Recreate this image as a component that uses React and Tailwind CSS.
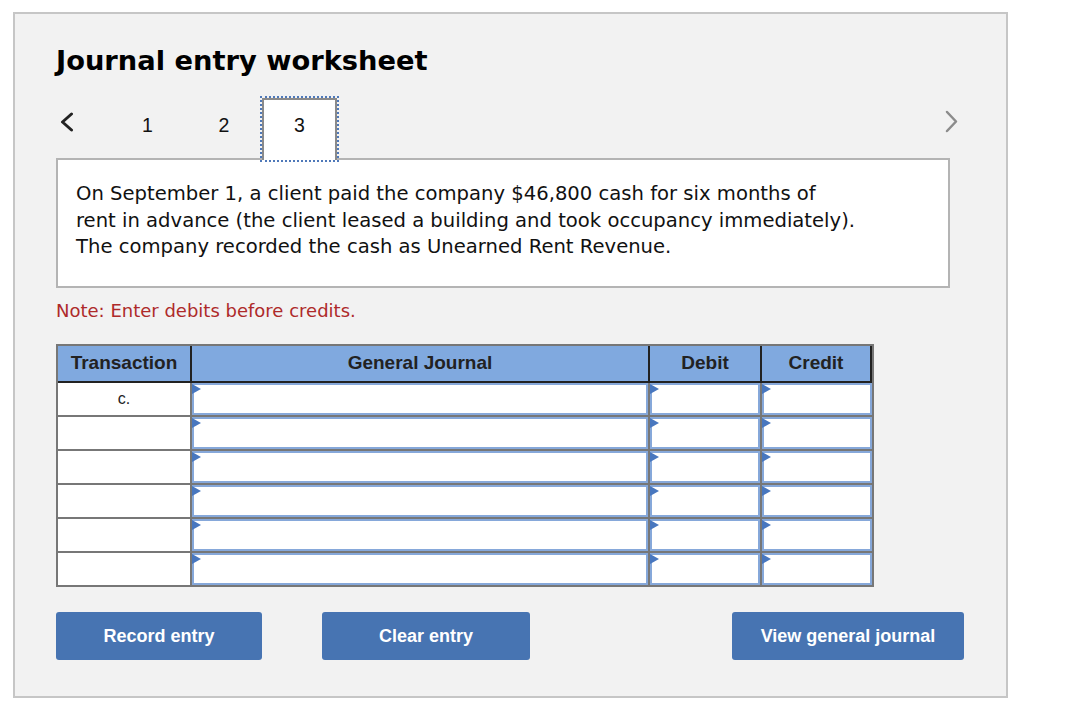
import React from 'react';

const rows = ['c.', '', '', '', '', ''];

const Flag = () => (
    <span className="absolute left-0 top-[1px] w-0 h-0 border-y-[5px] border-y-transparent border-l-[9px] border-l-[#4877bf]" />
);

const InputCell = ({ width, last }) => (
    <div className={`relative h-full ${width} ${last ? '' : 'border-r-2 border-[#777]'}`}>
        <div className="h-full w-full bg-white border-2 border-[#86a8da]" />
        <Flag />
    </div>
);

const App = () => {
    return (
        <div className="min-h-screen bg-white pt-[12px] pl-[13px]">
            <div className="w-[995px] h-[686px] border-2 border-[#c6c6c6] bg-[#f2f2f2] pt-[31px] pl-[41px]">
                {/* Title */}
                <h1 className="text-[27.3px] leading-[32px] font-bold text-black" style={{ fontFamily: '"DejaVu Sans", Verdana, sans-serif' }}>
                    Journal entry worksheet
                </h1>

                {/* Tabs */}
                <div className="mt-[19px] flex items-start h-[64px]" style={{ fontFamily: '"Liberation Sans", Arial, sans-serif' }}>
                    <button className="w-[53px] pt-[16px] pl-[4px] flex">
                        <svg width="14" height="20" viewBox="0 0 14 20" fill="none">
                            <polyline points="11.5,2 2.5,10 11.5,18" stroke="#222" strokeWidth="3" strokeLinecap="round" strokeLinejoin="round" />
                        </svg>
                    </button>
                    <div className="w-[77px] pt-[15px] text-center text-[19.5px] text-[#111]">1</div>
                    <div className="w-[76px] pt-[15px] text-center text-[19.5px] text-[#111]">2</div>
                    <div className="relative z-10 mt-[2px] w-[75px] h-[62px] bg-white border-2 border-b-0 border-[#8a8a8a] outline-2 outline-dotted outline-[#4f79b9] pt-[11px] text-center text-[19.5px] text-[#111]">
                        3
                    </div>
                    <button className="ml-auto mr-[48px] pt-[14px] flex">
                        <svg width="13" height="23" viewBox="0 0 13 23" fill="none">
                            <polyline points="2,2 11,11.5 2,21" stroke="#8c8c8c" strokeWidth="2.5" strokeLinecap="round" strokeLinejoin="round" />
                        </svg>
                    </button>
                </div>

                {/* Question text */}
                <div
                    className="-mt-[2px] w-[894px] h-[130px] bg-white border-2 border-[#b4b4b4] pt-[21px] pl-[18px] text-[19.6px] leading-[26.5px] text-[#111]"
                    style={{ fontFamily: '"DejaVu Sans", Verdana, sans-serif' }}
                >
                    On September 1, a client paid the company $46,800 cash for six months of
                    <br />
                    rent in advance (the client leased a building and took occupancy immediately).
                    <br />
                    The company recorded the cash as Unearned Rent Revenue.
                </div>

                <p className="mt-[11px] text-[18px] leading-[24px] text-[#ae2a2a]" style={{ fontFamily: '"DejaVu Sans", Verdana, sans-serif' }}>
                    Note: Enter debits before credits.
                </p>

                {/* Journal table */}
                <div className="mt-[21px] w-[818px] border-2 border-[#777]" style={{ fontFamily: '"Liberation Sans", Arial, sans-serif' }}>
                    <div className="flex h-[37px] bg-[#80a9df] border-b-2 border-[#222] text-[19px] font-bold text-[#222]">
                        <div className="w-[134px] border-r-2 border-[#222] flex items-center justify-center">Transaction</div>
                        <div className="w-[458px] border-r-2 border-[#222] flex items-center justify-center">General Journal</div>
                        <div className="w-[112px] border-r-2 border-[#222] flex items-center justify-center">Debit</div>
                        <div className="w-[110px] border-r-2 border-[#222] flex items-center justify-center">Credit</div>
                    </div>
                    {rows.map((t, i) => (
                        <div key={i} className={`flex ${i < rows.length - 1 ? 'h-[34px] border-b-2 border-[#777]' : 'h-[32px]'}`}>
                            <div className="w-[134px] h-full bg-white border-r-2 border-[#777] flex items-center justify-center text-[16px] text-[#222]">
                                {t}
                            </div>
                            <InputCell width="w-[458px]" />
                            <InputCell width="w-[112px]" />
                            <InputCell width="w-[110px]" last />
                        </div>
                    ))}
                </div>

                {/* Buttons */}
                <div className="mt-[25px] flex text-[18px] font-bold text-white" style={{ fontFamily: '"Liberation Sans", Arial, sans-serif' }}>
                    <button className="w-[206px] h-[48px] rounded-[3px] bg-[#4774b2]">Record entry</button>
                    <button className="ml-[60px] w-[208px] h-[48px] rounded-[3px] bg-[#4774b2]">Clear entry</button>
                    <button className="ml-[202px] w-[232px] h-[48px] rounded-[3px] bg-[#4774b2]">View general journal</button>
                </div>
            </div>
        </div>
    );
};

export default App;
